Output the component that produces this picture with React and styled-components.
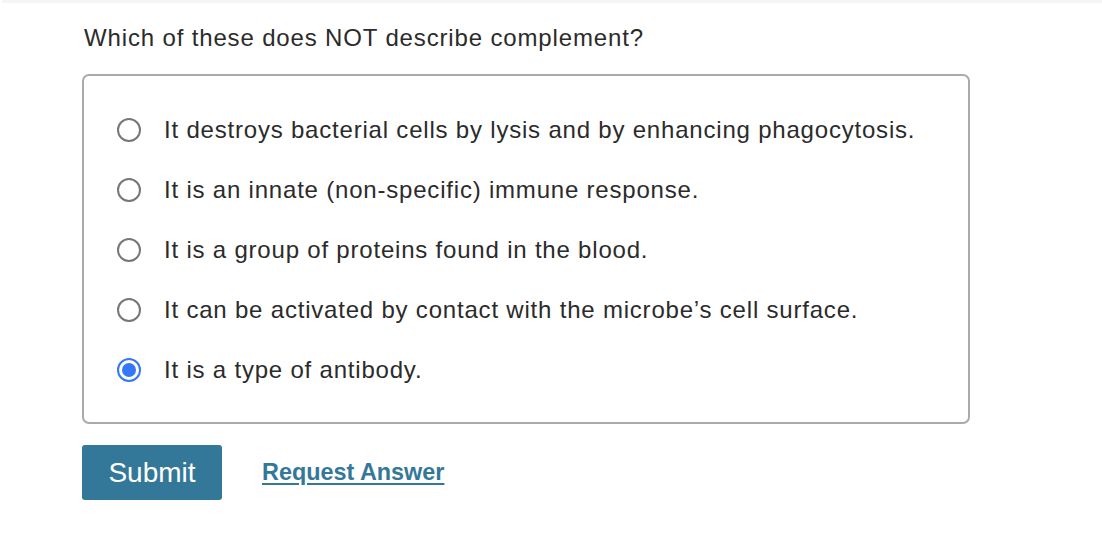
import React, { useState } from 'react';
import styled, { createGlobalStyle } from 'styled-components';

const GlobalStyle = createGlobalStyle`
  body {
    margin: 0;
    background: #fff;
    font-family: "Liberation Sans", Arial, sans-serif;
    color: #2b2b2b;
  }
`;

const TopStrip = styled.div`
  height: 3px;
  margin-left: 2px;
  background: #f5f5f5;
`;

const Page = styled.div`
  padding: 21px 0 0 82px;
  width: 888px;
`;

const Question = styled.h2`
  margin: 0 0 22px 2px;
  font-size: 24px;
  letter-spacing: 0.85px;
  font-weight: normal;
  line-height: 28px;
  color: #2b2b2b;
`;

const OptionsBox = styled.div`
  border: 2px solid #aaa;
  border-radius: 7px;
  padding: 24px 0 22px 33px;
  display: flex;
  flex-direction: column;
`;

const OptionRow = styled.label`
  display: flex;
  align-items: center;
  height: 60px;
  cursor: pointer;
  font-size: 24px;
  letter-spacing: 0.8px;
  color: #2b2b2b;
`;

const Radio = styled.span`
  width: 24px;
  height: 24px;
  box-sizing: border-box;
  border-radius: 50%;
  border: 2px solid ${p => (p.$checked ? '#3478f6' : '#777')};
  display: flex;
  align-items: center;
  justify-content: center;
  margin-right: 23px;
  flex-shrink: 0;

  &::after {
    content: '';
    width: 14px;
    height: 14px;
    border-radius: 50%;
    background: #3478f6;
    display: ${p => (p.$checked ? 'block' : 'none')};
  }
`;

const Actions = styled.div`
  display: flex;
  align-items: center;
  gap: 40px;
  margin-top: 21px;
`;

const SubmitButton = styled.button`
  width: 140px;
  height: 55px;
  border: none;
  border-radius: 3px;
  background: #337899;
  color: #fff;
  font-family: "Liberation Sans", Arial, sans-serif;
  font-size: 28px;
  cursor: pointer;
`;

const RequestLink = styled.a`
  color: #337899;
  font-weight: bold;
  font-size: 23.4px;
  text-decoration: underline;
  text-underline-offset: 3px;
  cursor: pointer;
`;

const options = [
  'It destroys bacterial cells by lysis and by enhancing phagocytosis.',
  'It is an innate (non-specific) immune response.',
  'It is a group of proteins found in the blood.',
  'It can be activated by contact with the microbe\u2019s cell surface.',
  'It is a type of antibody.',
];

export default function App() {
  const [selected, setSelected] = useState(4);

  return (
    <>
      <GlobalStyle />
      <TopStrip />
      <Page>
        <Question>Which of these does NOT describe complement?</Question>
        <OptionsBox>
          {options.map((text, i) => (
            <OptionRow key={i} onClick={() => setSelected(i)}>
              <Radio $checked={selected === i} />
              {text}
            </OptionRow>
          ))}
        </OptionsBox>
        <Actions>
          <SubmitButton>Submit</SubmitButton>
          <RequestLink>Request Answer</RequestLink>
        </Actions>
      </Page>
    </>
  );
}
